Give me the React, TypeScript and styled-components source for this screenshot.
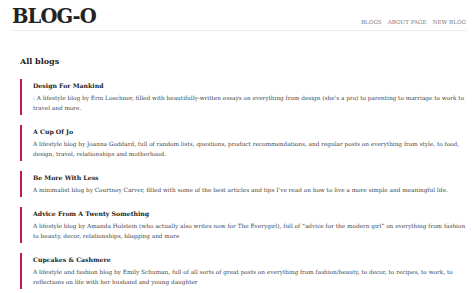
import React from "react";
import styled, { createGlobalStyle } from "styled-components";

const GlobalStyle = createGlobalStyle`
  html, body {
    margin: 0;
    padding: 0;
    background: #fff;
  }
  body {
    font-family: "DejaVu Serif", "Liberation Serif", serif;
    color: #333;
  }
`;

const Page = styled.div`
  padding: 0 8px 0 12px;
`;

const Header = styled.header`
  display: flex;
  justify-content: space-between;
  align-items: flex-end;
  height: 30px;
  border-bottom: 1px solid #ececec;
`;

const Logo = styled.h1`
  margin: 0 0 4px;
  font-size: 19.5px;
  font-weight: bold;
  letter-spacing: -0.9px;
  color: #222;
  line-height: 1;
`;

const Nav = styled.nav`
  display: flex;
  gap: 6px;
  margin-bottom: 5px;
`;

const NavLink = styled.a`
  font-size: 5.6px;
  color: #777;
  text-decoration: none;
  text-transform: uppercase;
  cursor: pointer;
`;

const Main = styled.main`
  padding: 0 0 0 8px;
`;

const Heading = styled.h2`
  margin: 26px 0 14px;
  font-size: 8px;
  font-weight: bold;
  color: #222;
  line-height: 1;
`;

const List = styled.ul`
  list-style: none;
  margin: 0;
  padding: 0;
  display: flex;
  flex-direction: column;
  gap: 10px;
`;

const Item = styled.li`
  border-left: 2px solid #c2184b;
  padding: 2px 0 2px 11px;
`;

const Title = styled.h3`
  margin: 0 0 2px;
  font-size: 6.2px;
  font-weight: bold;
  color: #222;
  line-height: 10px;
`;

const Description = styled.p`
  margin: 0;
  font-size: 5.75px;
  color: #444;
  line-height: 10px;
`;

type Blog = { name: string; description: string };

const blogs: Blog[] = [
  {
    name: "Design For Mankind",
    description:
      ": A lifestyle blog by Erin Loechner, filled with beautifully-written essays on everything from design (she's a pro) to parenting to marriage to work to travel and more.",
  },
  {
    name: "A Cup Of Jo",
    description:
      "A lifestyle blog by Joanna Goddard, full of random lists, questions, product recommendations, and regular posts on everything from style, to food, design, travel, relationships and motherhood.",
  },
  {
    name: "Be More With Less",
    description:
      "A minimalist blog by Courtney Carver, filled with some of the best articles and tips I've read on how to live a more simple and meaningful life.",
  },
  {
    name: "Advice From A Twenty Something",
    description:
      "A lifestyle blog by Amanda Holstein (who actually also writes now for The Everygirl), full of \u201Cadvice for the modern girl\u201D on everything from fashion to beauty, decor, relationships, blogging and more",
  },
  {
    name: "Cupcakes & Cashmere",
    description:
      "A lifestyle and fashion blog by Emily Schuman, full of all sorts of great posts on everything from fashion/beauty, to decor, to recipes, to work, to reflections on life with her husband and young daughter",
  },
];

const App = () => {
  return (
    <Page>
      <GlobalStyle />
      <Header>
        <Logo>BLOG-O</Logo>
        <Nav>
          <NavLink>Blogs</NavLink>
          <NavLink>About page</NavLink>
          <NavLink>New blog</NavLink>
        </Nav>
      </Header>
      <Main>
        <Heading>All blogs</Heading>
        <List>
          {blogs.map((blog) => (
            <Item key={blog.name}>
              <Title>{blog.name}</Title>
              <Description>{blog.description}</Description>
            </Item>
          ))}
        </List>
      </Main>
    </Page>
  );
};

export default App;
